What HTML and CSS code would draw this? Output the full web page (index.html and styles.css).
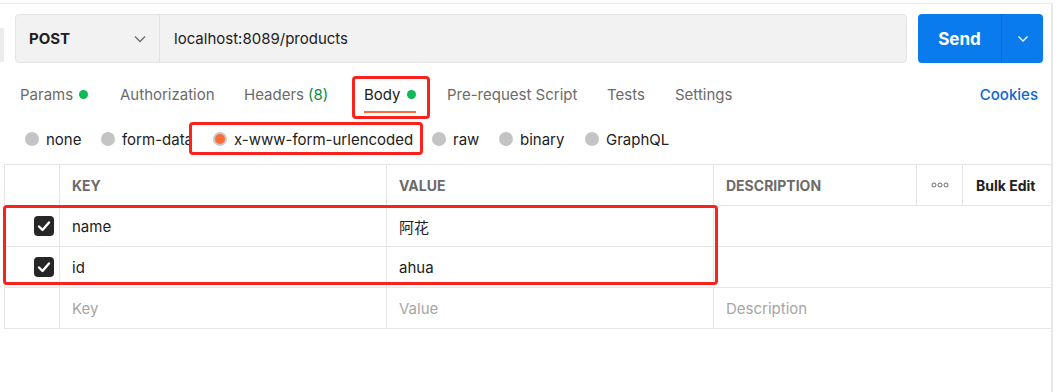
FILE: index.html
```html
<!DOCTYPE html>
<html lang="en">
    <head>
        <meta charset="UTF-8">
        <title>POST localhost:8089/products</title>
        <link rel="stylesheet" href="styles.css">
    </head>
    <body>
        <div class="main">
            <div class="top-rule"></div>

            <div class="request-row">
                <div class="edge"></div>
                <div class="request-box">
                    <div class="method">
                        <span>POST</span>
                        <svg class="chev" width="12" height="8" viewBox="0 0 12 8"><path d="M1 1.5 L6 6.5 L11 1.5" fill="none" stroke="#6b6b6b" stroke-width="1.3"/></svg>
                    </div>
                    <div class="url">localhost:8089/products</div>
                </div>
                <div class="send">
                    <span class="send-label">Send</span>
                    <span class="send-more">
                        <svg width="12" height="8" viewBox="0 0 12 8"><path d="M1.5 1.5 L6 6 L10.5 1.5" fill="none" stroke="#fff" stroke-width="1.3"/></svg>
                    </span>
                </div>
            </div>

            <div class="tabs">
                <div class="tab" style="width:100px">Params <span class="dot"></span></div>
                <div class="tab" style="width:124px">Authorization</div>
                <div class="tab" style="width:120px">Headers <span class="count">(8)</span></div>
                <div class="tab active" style="width:83px">Body <span class="dot"></span><span class="mark mark-body"></span></div>
                <div class="tab" style="width:160px">Pre-request Script</div>
                <div class="tab" style="width:68px">Tests</div>
                <div class="tab">Settings</div>
                <div class="tab cookies">Cookies</div>
            </div>

            <div class="body-types">
                <label class="radio-item" style="width:76px"><span class="radio"></span>none</label>
                <label class="radio-item" style="width:112px"><span class="radio"></span>form-data</label>
                <label class="radio-item" style="width:219px"><span class="radio on"></span>x-www-form-urlencoded<span class="mark mark-radio"></span></label>
                <label class="radio-item" style="width:67px"><span class="radio"></span>raw</label>
                <label class="radio-item" style="width:86px"><span class="radio"></span>binary</label>
                <label class="radio-item"><span class="radio"></span>GraphQL</label>
            </div>

            <div class="table">
                <div class="row head">
                    <div class="cell"></div>
                    <div class="cell">KEY</div>
                    <div class="cell">VALUE</div>
                    <div class="cell">DESCRIPTION</div>
                    <div class="cell dots">
                        <svg width="18" height="6" viewBox="0 0 18 6"><circle cx="3" cy="3" r="2" fill="none" stroke="#6b6b6b" stroke-width="1"/><circle cx="9" cy="3" r="2" fill="none" stroke="#6b6b6b" stroke-width="1"/><circle cx="15" cy="3" r="2" fill="none" stroke="#6b6b6b" stroke-width="1"/></svg>
                    </div>
                    <div class="cell bulk">Bulk Edit</div>
                </div>
                <div class="row">
                    <div class="cell check"><span class="checkbox"><svg width="14" height="12" viewBox="0 0 14 12"><path d="M2 6.5 L5.5 10 L12 2.5" fill="none" stroke="#fff" stroke-width="2.4" stroke-linecap="round" stroke-linejoin="round"/></svg></span></div>
                    <div class="cell">name</div>
                    <div class="cell">阿花</div>
                    <div class="cell wide"></div>
                </div>
                <div class="row">
                    <div class="cell check"><span class="checkbox"><svg width="14" height="12" viewBox="0 0 14 12"><path d="M2 6.5 L5.5 10 L12 2.5" fill="none" stroke="#fff" stroke-width="2.4" stroke-linecap="round" stroke-linejoin="round"/></svg></span></div>
                    <div class="cell">id</div>
                    <div class="cell">ahua</div>
                    <div class="cell wide"></div>
                </div>
                <div class="row placeholder">
                    <div class="cell"></div>
                    <div class="cell">Key</div>
                    <div class="cell">Value</div>
                    <div class="cell wide">Description</div>
                </div>
                <div class="mark mark-rows"></div>
            </div>
        </div>
    </body>
</html>
```

FILE: styles.css
```css
* {
    margin: 0;
    padding: 0;
    box-sizing: border-box;
}

body {
    background: #fff;
    color: #212121;
    font-family: Inter, "Noto Sans", "Noto Sans CJK SC", sans-serif;
    font-size: 15px;
    width: 1058px;
    height: 392px;
    overflow: hidden;
}

.main {
    width: 1053px;
    height: 392px;
    border-right: 2px solid #e8e8e8;
}

.top-rule {
    margin-top: 3px;
    border-top: 1px solid #ebebeb;
}

/* request bar */
.request-row {
    display: flex;
    padding-top: 10px;
    height: 59px;
}

.edge {
    width: 4px;
    height: 34px;
    margin-top: 14px;
    background: #ececec;
}

.request-box {
    display: flex;
    margin-left: 11px;
    width: 892px;
    height: 49px;
    background: #f2f2f2;
    border: 1px solid #e4e4e4;
    border-radius: 4px;
}

.method {
    width: 144px;
    display: flex;
    align-items: center;
    justify-content: space-between;
    padding: 0 13px 0 13px;
    border-right: 1px solid #e2e2e2;
    font-weight: 700;
    font-size: 15px;
}

.url {
    display: flex;
    align-items: center;
    padding-left: 14px;
    font-size: 15px;
}

.send {
    display: flex;
    margin-left: 11px;
    width: 125px;
    height: 49px;
    background: #097bed;
    border-radius: 4px;
    color: #fff;
}

.send-label {
    width: 84px;
    display: flex;
    align-items: center;
    justify-content: center;
    font-weight: 700;
    font-size: 17px;
    border-right: 1px solid #0a6bcf;
}

.send-more {
    flex: 1;
    display: flex;
    align-items: center;
    justify-content: center;
}

/* tabs */
.tabs {
    display: flex;
    margin-top: 13px;
    padding-left: 20px;
    height: 36px;
}

.tab {
    position: relative;
    display: flex;
    align-items: center;
    height: 36px;
    color: #6b6b6b;
    white-space: nowrap;
}

.tab.active {
    color: #212121;
}

.tab.active::after {
    content: "";
    position: absolute;
    left: 0;
    bottom: -1px;
    width: 52px;
    height: 2px;
    background: #ff6c37;
}

.dot {
    display: inline-block;
    width: 9px;
    height: 9px;
    margin-left: 6px;
    border-radius: 50%;
    background: #0cbb52;
}

.count {
    margin-left: 4px;
    color: #0a8a3e;
}

.cookies {
    margin-left: auto;
    margin-right: 13px;
    color: #0b66d3;
    font-weight: 500;
}

/* body type radios */
.body-types {
    display: flex;
    align-items: center;
    height: 50px;
    padding-left: 25px;
    margin-top: 2px;
}

.radio-item {
    position: relative;
    display: flex;
    align-items: center;
    color: #212121;
    white-space: nowrap;
}

.radio {
    width: 14px;
    height: 14px;
    margin-right: 7px;
    border-radius: 50%;
    background: #c4c4c4;
}

.radio.on {
    background: #ff6c37;
    border: 2px solid #c9c9c9;
}

/* params table */
.table {
    position: relative;
    margin-left: 4px;
    border-top: 1px solid #e6e6e6;
    border-left: 1px solid #e6e6e6;
}

.row {
    display: grid;
    grid-template-columns: 55px 327px 327px 203px 46px 1fr;
    height: 41px;
    border-bottom: 1px solid #e6e6e6;
}

.cell {
    display: flex;
    align-items: center;
    padding-left: 12px;
    border-right: 1px solid #e6e6e6;
    white-space: nowrap;
}

.cell.wide {
    grid-column: span 3;
    border-right: none;
}

.head .cell {
    font-weight: 700;
    font-size: 14px;
    color: #6b6b6b;
}

.head .cell.bulk {
    border-right: none;
    padding-left: 13px;
    color: #212121;
}

.cell.dots {
    padding-left: 14px;
}

.cell.check {
    justify-content: flex-end;
    padding-right: 5px;
}

.checkbox {
    display: flex;
    align-items: center;
    justify-content: center;
    width: 20px;
    height: 20px;
    border-radius: 4px;
    background: #262626;
}

.placeholder .cell {
    color: #a6a6a6;
}

/* red annotation boxes */
.mark {
    position: absolute;
    border: 3px solid #f7231c;
    border-radius: 4px;
    pointer-events: none;
}

.mark-body {
    left: -12px;
    top: 0;
    width: 78px;
    height: 43px;
}

.mark-radio {
    left: -24px;
    top: -8px;
    width: 234px;
    height: 33px;
}

.mark-rows {
    left: -2px;
    top: 40px;
    width: 715px;
    height: 80px;
}
```
